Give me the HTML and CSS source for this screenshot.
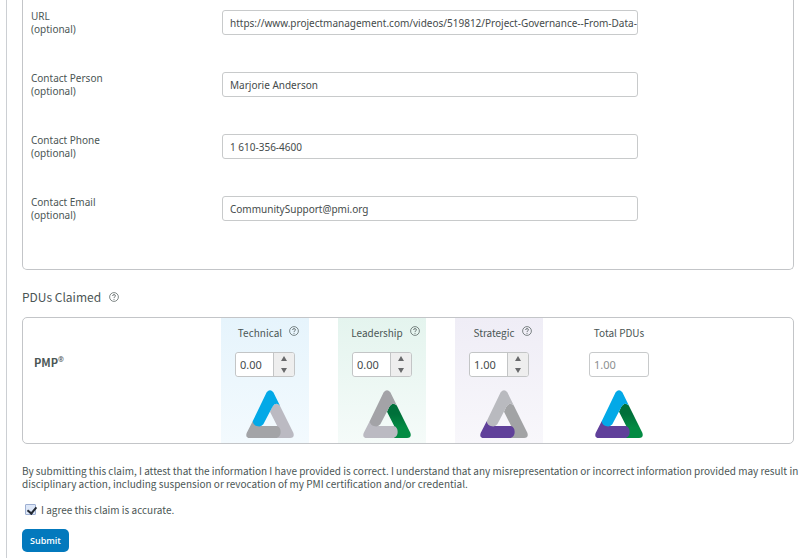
FILE: index.html
```html
<!DOCTYPE html>
<html lang="en">
<head>
    <meta charset="UTF-8">
    <meta name="viewport" content="width=device-width, initial-scale=1.0">
    <title>Report PDUs</title>
    <link rel="stylesheet" href="styles.css">
</head>
<body>

    <!-- Shared icon shapes -->
    <svg class="defs" width="0" height="0" aria-hidden="true">
        <symbol id="help" viewBox="0 0 10 10">
            <circle cx="5" cy="5" r="4.4" fill="none" stroke="currentColor" stroke-width="0.7"/>
            <path d="M3.6 4 Q3.7 2.6 5 2.6 Q6.4 2.6 6.4 3.8 Q6.4 4.6 5.6 5 Q5 5.3 5 6" fill="none" stroke="currentColor" stroke-width="0.8"/>
            <circle cx="5" cy="7.3" r="0.5" fill="currentColor"/>
        </symbol>
        <symbol id="right-side" viewBox="0 0 144 144">
            <path d="M72 65 L78 52 Q88 34 101 46 L142 128 Q147 144 132 144 L84 144 L84 112 L94 109 Z"/>
        </symbol>
        <symbol id="base-side" viewBox="0 0 144 144">
            <path d="M20 94 L2 129 Q-3 144 12 144 L92 144 Q104 140 104 126 Q104 112 93 108 L40 108 Z"/>
        </symbol>
        <symbol id="left-side" viewBox="0 0 144 144">
            <path d="M62 7 Q72 -6 82 7 L102 47 Q88 34 79 51 L52 103 Q46 111 36 109 Q22 108 20 94 Z"/>
        </symbol>
    </svg>

    <form class="claim" action="#" method="post">

        <!-- Contact details -->
        <section class="panel details">
            <div class="field">
                <label for="url">URL<br>(optional)</label>
                <input type="text" id="url" value="https://www.projectmanagement.com/videos/519812/Project-Governance--From-Data-">
            </div>
            <div class="field">
                <label for="person">Contact Person<br>(optional)</label>
                <input type="text" id="person" value="Marjorie Anderson">
            </div>
            <div class="field">
                <label for="phone">Contact Phone<br>(optional)</label>
                <input type="text" id="phone" value="1 610-356-4600">
            </div>
            <div class="field">
                <label for="email">Contact Email<br>(optional)</label>
                <input type="text" id="email" value="CommunitySupport@pmi.org">
            </div>
        </section>

        <!-- PDUs -->
        <h2>PDUs Claimed <svg class="help"><use href="#help"/></svg></h2>
        <section class="panel pdus">
            <h3>PMP<sup>®</sup></h3>
            <div class="pdu technical">
                <label for="technical">Technical <svg class="help"><use href="#help"/></svg></label>
                <div class="spinner">
                    <input type="text" id="technical" value="0.00">
                    <div class="arrows">
                        <button type="button" aria-label="Increase technical"><svg viewBox="0 0 6 5"><path d="M3 0 L6 5 L0 5 Z"/></svg></button>
                        <button type="button" aria-label="Decrease technical"><svg viewBox="0 0 6 5"><path d="M0 0 L6 0 L3 5 Z"/></svg></button>
                    </div>
                </div>
                <svg class="triangle" viewBox="0 0 144 144">
                    <use href="#right-side" fill="#bbbac2"/>
                    <use href="#base-side" fill="#a3a4a7"/>
                    <use href="#left-side" fill="#03a9e7"/>
                </svg>
            </div>
            <div class="pdu leadership">
                <label for="leadership">Leadership <svg class="help"><use href="#help"/></svg></label>
                <div class="spinner">
                    <input type="text" id="leadership" value="0.00">
                    <div class="arrows">
                        <button type="button" aria-label="Increase leadership"><svg viewBox="0 0 6 5"><path d="M3 0 L6 5 L0 5 Z"/></svg></button>
                        <button type="button" aria-label="Decrease leadership"><svg viewBox="0 0 6 5"><path d="M0 0 L6 0 L3 5 Z"/></svg></button>
                    </div>
                </div>
                <svg class="triangle" viewBox="0 0 144 144">
                    <use href="#right-side" fill="url(#green)"/>
                    <use href="#base-side" fill="#bbbac2"/>
                    <use href="#left-side" fill="#a3a3a7"/>
                    <linearGradient id="green" x1="0" y1="0" x2="0" y2="1">
                        <stop offset="0.3" stop-color="#00703a"/>
                        <stop offset="0.7" stop-color="#038b43"/>
                    </linearGradient>
                </svg>
            </div>
            <div class="pdu strategic">
                <label for="strategic">Strategic <svg class="help"><use href="#help"/></svg></label>
                <div class="spinner">
                    <input type="text" id="strategic" value="1.00">
                    <div class="arrows">
                        <button type="button" aria-label="Increase strategic"><svg viewBox="0 0 6 5"><path d="M3 0 L6 5 L0 5 Z"/></svg></button>
                        <button type="button" aria-label="Decrease strategic"><svg viewBox="0 0 6 5"><path d="M0 0 L6 0 L3 5 Z"/></svg></button>
                    </div>
                </div>
                <svg class="triangle" viewBox="0 0 144 144">
                    <use href="#right-side" fill="#a2a3a5"/>
                    <use href="#base-side" fill="#60409a"/>
                    <use href="#left-side" fill="#b9babf"/>
                </svg>
            </div>
            <div class="pdu total">
                <label for="total">Total PDUs</label>
                <input type="text" id="total" value="1.00" disabled>
                <svg class="triangle" viewBox="0 0 144 144">
                    <use href="#right-side" fill="url(#green)"/>
                    <use href="#base-side" fill="#60409a"/>
                    <use href="#left-side" fill="#03a9e7"/>
                </svg>
            </div>
        </section>

        <!-- Agreement -->
        <p>By submitting this claim, I attest that the information I have provided is correct. I understand that any misrepresentation or incorrect information provided may result in disciplinary action, including suspension or revocation of my PMI certification and/or credential.</p>
        <div class="agree">
            <input type="checkbox" id="agree" checked>
            <label for="agree">I agree this claim is accurate.</label>
        </div>
        <button type="submit" class="submit">Submit</button>
    </form>

</body>
</html>
```
FILE: styles.css
```css
* {
    box-sizing: border-box;
}
body {
    margin: 0;
    padding-left: 6px;
    background-color: white;
    color: #4b5655;
    font-family: "Noto Sans CJK SC", "Noto Sans", sans-serif;
    font-size: 10px;
    line-height: 13px;
}
.defs {
    position: absolute;
}
.claim {
    border-left: 1px solid #cccfd3;
    padding: 0 6px 7px 15px;
}
.panel {
    border: 1px solid #c3c5c8;
    border-radius: 5px;
}
input {
    font-family: "Noto Sans", sans-serif;
    font-size: 10px;
    color: #454b4b;
    background-color: white;
    border: 1px solid #c8cacb;
    border-radius: 3px;
}

/* Contact details */
.details {
    border-top: none;
    border-radius: 0 0 5px 5px;
    padding: 10px 8px 11px;
}
.field {
    display: grid;
    grid-template-columns: 191px minmax(0, 416px);
    height: 62px;
    font-family: "Noto Sans", sans-serif;
}
.field input {
    width: 100%;
    height: 25px;
    padding: 0 0 0 7px;
}

/* PDUs */
h2 {
    display: flex;
    align-items: center;
    gap: 8px;
    margin: 19px 0 12px;
    font-size: 12px;
    font-weight: normal;
    line-height: 16px;
}
.help {
    width: 10px;
    height: 10px;
}
.pdus {
    display: flex;
    gap: 29px;
    height: 127px;
}
h3 {
    width: 169px;
    margin: 0;
    padding: 37px 0 0 11px;
    font-size: 11px;
    line-height: 15px;
}
h3 sup {
    font-family: "Noto Sans", sans-serif;
    font-size: 7px;
    line-height: 0;
}
.pdu {
    display: flex;
    flex-direction: column;
    align-items: center;
    width: 88px;
    padding-top: 8px;
}
.pdu label {
    display: flex;
    gap: 7px;
    padding-left: 7px;
}
.technical {
    background: linear-gradient(#e6f4fc, #f3fafe);
}
.leadership {
    background: linear-gradient(#e4f4ee, #f5fbf9);
}
.strategic {
    background: linear-gradient(#efedf6, #f8f7fb);
}
.spinner {
    display: flex;
    width: 60px;
    height: 25px;
    margin: 13px 0;
    border: 1px solid #c3c5c6;
    border-radius: 3px;
    background-color: white;
    overflow: hidden;
}
.spinner input {
    width: 37px;
    padding: 0 4px;
    border: none;
    font-size: 11px;
}
.arrows {
    display: flex;
    flex-direction: column;
    flex: 1;
    border-left: 1px solid #c3c5c6;
    background-color: #eeeeee;
}
.arrows button {
    display: flex;
    align-items: center;
    justify-content: center;
    flex: 1;
    padding: 0;
    border: none;
    background: none;
}
.arrows svg {
    width: 6px;
    height: 5px;
    fill: #68696b;
}
.triangle {
    width: 48px;
    height: 48px;
    margin-left: 9px;
}
.total {
    width: 94px;
}
.total label {
    padding-left: 0;
}
.total input {
    width: 60px;
    height: 25px;
    margin: 13px 0;
    padding: 0 4px;
    font-size: 11px;
    color: #8c8f90;
}
.total .triangle {
    margin-left: 0;
}

/* Agreement */
p {
    margin: 20px -6px 13px 0;
}
.agree {
    display: flex;
    align-items: center;
    gap: 5px;
}
.agree input {
    appearance: none;
    position: relative;
    width: 11px;
    height: 11px;
    margin: 0 0 0 3px;
    border: 1px solid #9dafd2;
    border-radius: 1px;
    background: #dde7f8;
}
.agree input:checked::after {
    content: "";
    position: absolute;
    top: 0;
    left: 3px;
    width: 4px;
    height: 7px;
    border: solid #222933;
    border-width: 0 2px 2px 0;
    transform: rotate(40deg);
}
.submit {
    height: 23px;
    margin-top: 13px;
    padding: 0 8px;
    border: none;
    border-radius: 5px;
    background-color: #0379bd;
    color: white;
    font-family: "Open Sans", sans-serif;
    font-size: 9px;
    font-weight: 600;
}
```
